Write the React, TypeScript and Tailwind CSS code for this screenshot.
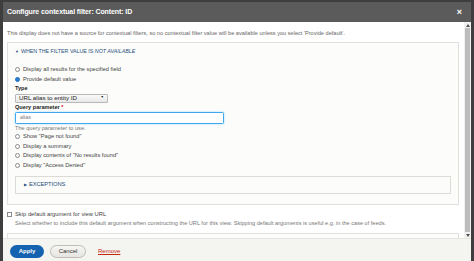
import React from "react";

function Radio({ checked = false, label }: { checked?: boolean; label: string }) {
  return (
    <div className="flex items-center h-[9.5px] gap-[3px]">
      {checked ? (
        <span className="w-[5px] h-[5px] rounded-full bg-[#2a7fd4] border border-[#1d6fc0] shrink-0" />
      ) : (
        <span className="w-[5px] h-[5px] rounded-full bg-white border border-[#8a8a8a] shrink-0" />
      )}
      <span className="text-[5.7px] text-[#444]">{label}</span>
    </div>
  );
}

export default function App() {
  return (
    <div
      className="w-[474px] h-[261px] bg-[#3e3e3e] overflow-hidden pt-[2px] pl-[3px] pr-[3px]"
      style={{ fontFamily: '"Liberation Sans", Arial, sans-serif' }}
    >
      <div className="flex flex-col h-[259px] bg-white">
        {/* Title bar */}
        <div className="h-[20px] shrink-0 bg-[#5b5b5b] flex items-center justify-between pl-[4px] pr-[9px] text-white">
          <span className="text-[7px] font-bold tracking-[-0.1px]">Configure contextual filter: Content: ID</span>
          <span className="text-[9px] font-bold leading-none">×</span>
        </div>

        {/* Body */}
        <div className="flex flex-1 min-h-0">
          <div className="flex-1 overflow-hidden pl-[4px] pr-[5px] pt-[8px]">
            <p className="text-[5.6px] leading-[6px] text-[#666] whitespace-nowrap">
              This display does not have a source for contextual filters, so no contextual filter value will be available unless you select 'Provide default'.
            </p>

            <div className="mt-[6px] border border-[#e2e0dc] bg-[#fcfcfa] pt-[5px] pl-[7px] pr-[7px] pb-[10px]">
              <div className="text-[5.3px] leading-[6px] text-[#1f4f7c] uppercase">
                <span className="text-[4px] mr-[2px]">▼</span>When the filter value is <i>not available</i>
              </div>

              <div className="mt-[10px]">
                <Radio label="Display all results for the specified field" />
                <Radio checked label="Provide default value" />
              </div>

              <div className="h-[9px] flex items-center text-[5.6px] font-bold text-[#222]">Type</div>
              <div className="w-[93px] h-[9px] mt-[0.5px] border border-[#b8b8b8] rounded-[1px] bg-gradient-to-b from-[#fafafa] to-[#e8e8e8] flex items-center justify-between pl-[3px] pr-[3px]">
                <span className="text-[6.2px] text-[#222]">URL alias to entity ID</span>
                <span className="text-[3.5px] text-[#222]">▼</span>
              </div>

              <div className="h-[9px] flex items-center text-[5.6px] font-bold text-[#222]">
                Query parameter <span className="text-[#e0001b] ml-[1.5px]">*</span>
              </div>
              <div className="w-[209px] h-[12px] border border-[#40a8f0] rounded-[1.5px] bg-white shadow-[0_0_2px_#8fd0ff] flex items-center pl-[4px]">
                <span className="text-[5.3px] text-[#777]">alias</span>
              </div>
              <div className="h-[8.5px] flex items-center text-[5.6px] text-[#777]">The query parameter to use.</div>

              <div>
                <Radio label='Show "Page not found"' />
                <Radio label="Display a summary" />
                <Radio label='Display contents of "No results found"' />
                <Radio label='Display "Access Denied"' />
              </div>

              <div className="mt-[5.5px] h-[18px] border border-[#dddbd6] bg-[#fcfcfa] flex items-center pl-[8px]">
                <span className="text-[5.8px] text-[#1f4f7c] uppercase tracking-[-0.1px]">
                  <span className="text-[3.5px] mr-[2px]">▶</span>Exceptions
                </span>
              </div>
            </div>

            <div className="mt-[5.5px] h-[9px] flex items-center gap-[3px]">
              <span className="w-[5px] h-[5px] border border-[#8a8a8a] bg-white shrink-0" />
              <span className="text-[5.8px] text-[#444]">Skip default argument for view URL</span>
            </div>
            <div className="pl-[8px] h-[8px] flex items-center text-[5.6px] text-[#777] whitespace-nowrap">
              Select whether to include this default argument when constructing the URL for this view. Skipping default arguments is useful e.g. in the case of feeds.
            </div>

            <div className="mt-[6px] border border-[#e2e0dc] bg-[#fcfcfa] pt-[5px] pl-[7px] h-[30px]">
              <div className="text-[5.3px] leading-[6px] text-[#1f4f7c] uppercase">
                <span className="text-[4px] mr-[2px]">▼</span>When the filter value is available or a default is provided
              </div>
            </div>
          </div>

          {/* Scrollbar */}
          <div className="w-[7px] shrink-0 bg-[#f1f1f1] flex flex-col items-center">
            <div className="h-[6px] flex items-center justify-center">
              <svg width="4" height="3" viewBox="0 0 4 3"><path d="M0 3 L2 0 L4 3 Z" fill="#505050" /></svg>
            </div>
            <div className="flex-1 w-[5px] bg-[#bcbcbc]" />
            <div className="h-[6px] flex items-center justify-center">
              <svg width="4" height="3" viewBox="0 0 4 3"><path d="M0 0 L4 0 L2 3 Z" fill="#505050" /></svg>
            </div>
          </div>
        </div>

        {/* Footer */}
        <div className="h-[23px] shrink-0 bg-[#f4f4f1] border-t border-[#e4e4e0] flex items-center pl-[7px] pt-[3px]">
          <button className="w-[34px] h-[13px] rounded-full bg-[#1462b0] text-white text-[6px] font-bold flex items-center justify-center">
            Apply
          </button>
          <button className="ml-[6px] w-[36px] h-[13px] rounded-full bg-gradient-to-b from-[#f6f6f3] to-[#e6e5e1] border border-[#bdbcb8] text-[#333] text-[6px] flex items-center justify-center">
            Cancel
          </button>
          <span className="ml-[12px] text-[6px] text-[#c4260c] underline">Remove</span>
        </div>
      </div>
    </div>
  );
}
